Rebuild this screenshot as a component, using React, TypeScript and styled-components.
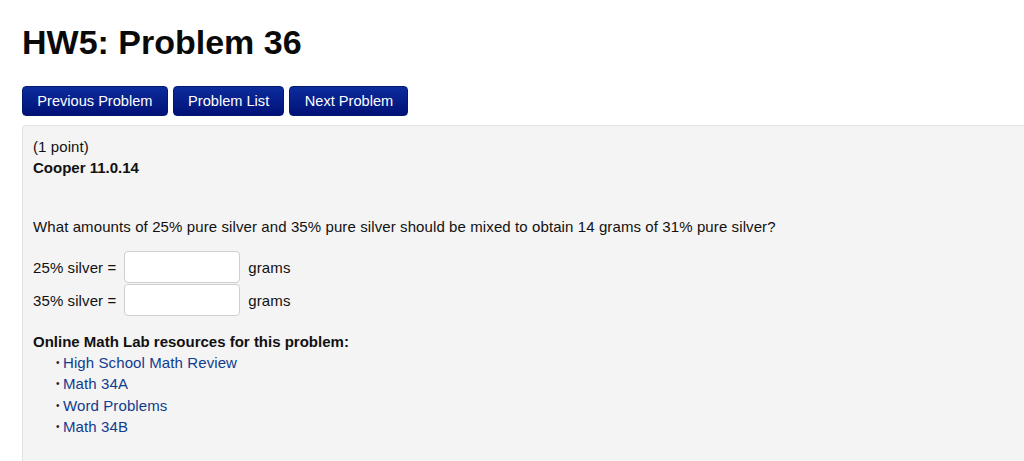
import styled, {createGlobalStyle} from 'styled-components';

const GlobalStyle = createGlobalStyle`
  html, body {
    margin: 0;
    padding: 0;
    background: #ffffff;
    font-family: 'Liberation Sans', Arial, sans-serif;
    color: #111;
  }
`;

const Page = styled.main`
  padding: 22px 0 0 22px;
`;

const Title = styled.h1`
  margin: 0;
  font-size: 34px;
  line-height: 40px;
  font-weight: 700;
  color: #0a0a0a;
`;

const Nav = styled.nav`
  display: flex;
  gap: 5px;
  margin-top: 24px;
`;

const NavButton = styled.button`
  height: 30px;
  padding: 0 14.3px;
  border: 1px solid #001a6e;
  border-radius: 4px;
  background: linear-gradient(to bottom, #0c2c9c 0%, #001177 100%);
  color: #fff;
  font-family: inherit;
  font-size: 14.6px;
  cursor: pointer;
`;

const Panel = styled.section`
  margin-top: 9px;
  padding: 10px 10px 40px;
  background: #f4f4f4;
  border: 1px solid #e2e2e2;
  border-right: none;
  border-radius: 4px 0 0 4px;
  font-size: 15px;
  letter-spacing: 0.1px;
  line-height: 21px;
`;

const Line = styled.div<{bold?: boolean; gap?: number}>`
  font-weight: ${({bold}) => (bold ? 700 : 400)};
  letter-spacing: ${({bold}) => (bold ? '0' : '0.1px')};
  margin-top: ${({gap}) => gap ?? 0}px;
`;

const Answers = styled.div`
  display: flex;
  flex-direction: column;
  gap: 1px;
  margin-top: 14px;
`;

const AnswerRow = styled.label`
  display: flex;
  align-items: center;
  gap: 8px;
`;

const AnswerInput = styled.input`
  width: 116px;
  height: 32px;
  box-sizing: border-box;
  border: 1px solid #cfcfcf;
  border-radius: 4px;
  background: #fff;
  margin: 0;
`;

const ResourceList = styled.ul`
  list-style: none;
  margin: 0;
  padding: 0 0 0 23px;
  line-height: 21.3px;
`;

const ResourceItem = styled.li`
  display: flex;
  align-items: center;
  &::before {
    content: '•';
    font-size: 10px;
    width: 7px;
    color: #222;
  }
`;

const ResourceLink = styled.a`
  color: #103c8e;
  text-decoration: none;
`;

const resources = ['High School Math Review', 'Math 34A', 'Word Problems', 'Math 34B'];

export default function App() {
  return (
    <>
      <GlobalStyle />
      <Page>
        <Title>HW5: Problem 36</Title>
        <Nav>
          <NavButton>Previous Problem</NavButton>
          <NavButton>Problem List</NavButton>
          <NavButton>Next Problem</NavButton>
        </Nav>
        <Panel>
          <Line>(1 point)</Line>
          <Line bold>Cooper 11.0.14</Line>
          <Line gap={38}>
            What amounts of 25% pure silver and 35% pure silver should be mixed to obtain 14 grams of 31% pure silver?
          </Line>
          <Answers>
            <AnswerRow>
              25% silver = <AnswerInput type='text' /> grams
            </AnswerRow>
            <AnswerRow>
              35% silver = <AnswerInput type='text' /> grams
            </AnswerRow>
          </Answers>
          <Line bold gap={15}>Online Math Lab resources for this problem:</Line>
          <ResourceList>
            {resources.map((r) => (
              <ResourceItem key={r}>
                <ResourceLink href='#'>{r}</ResourceLink>
              </ResourceItem>
            ))}
          </ResourceList>
        </Panel>
      </Page>
    </>
  );
}
